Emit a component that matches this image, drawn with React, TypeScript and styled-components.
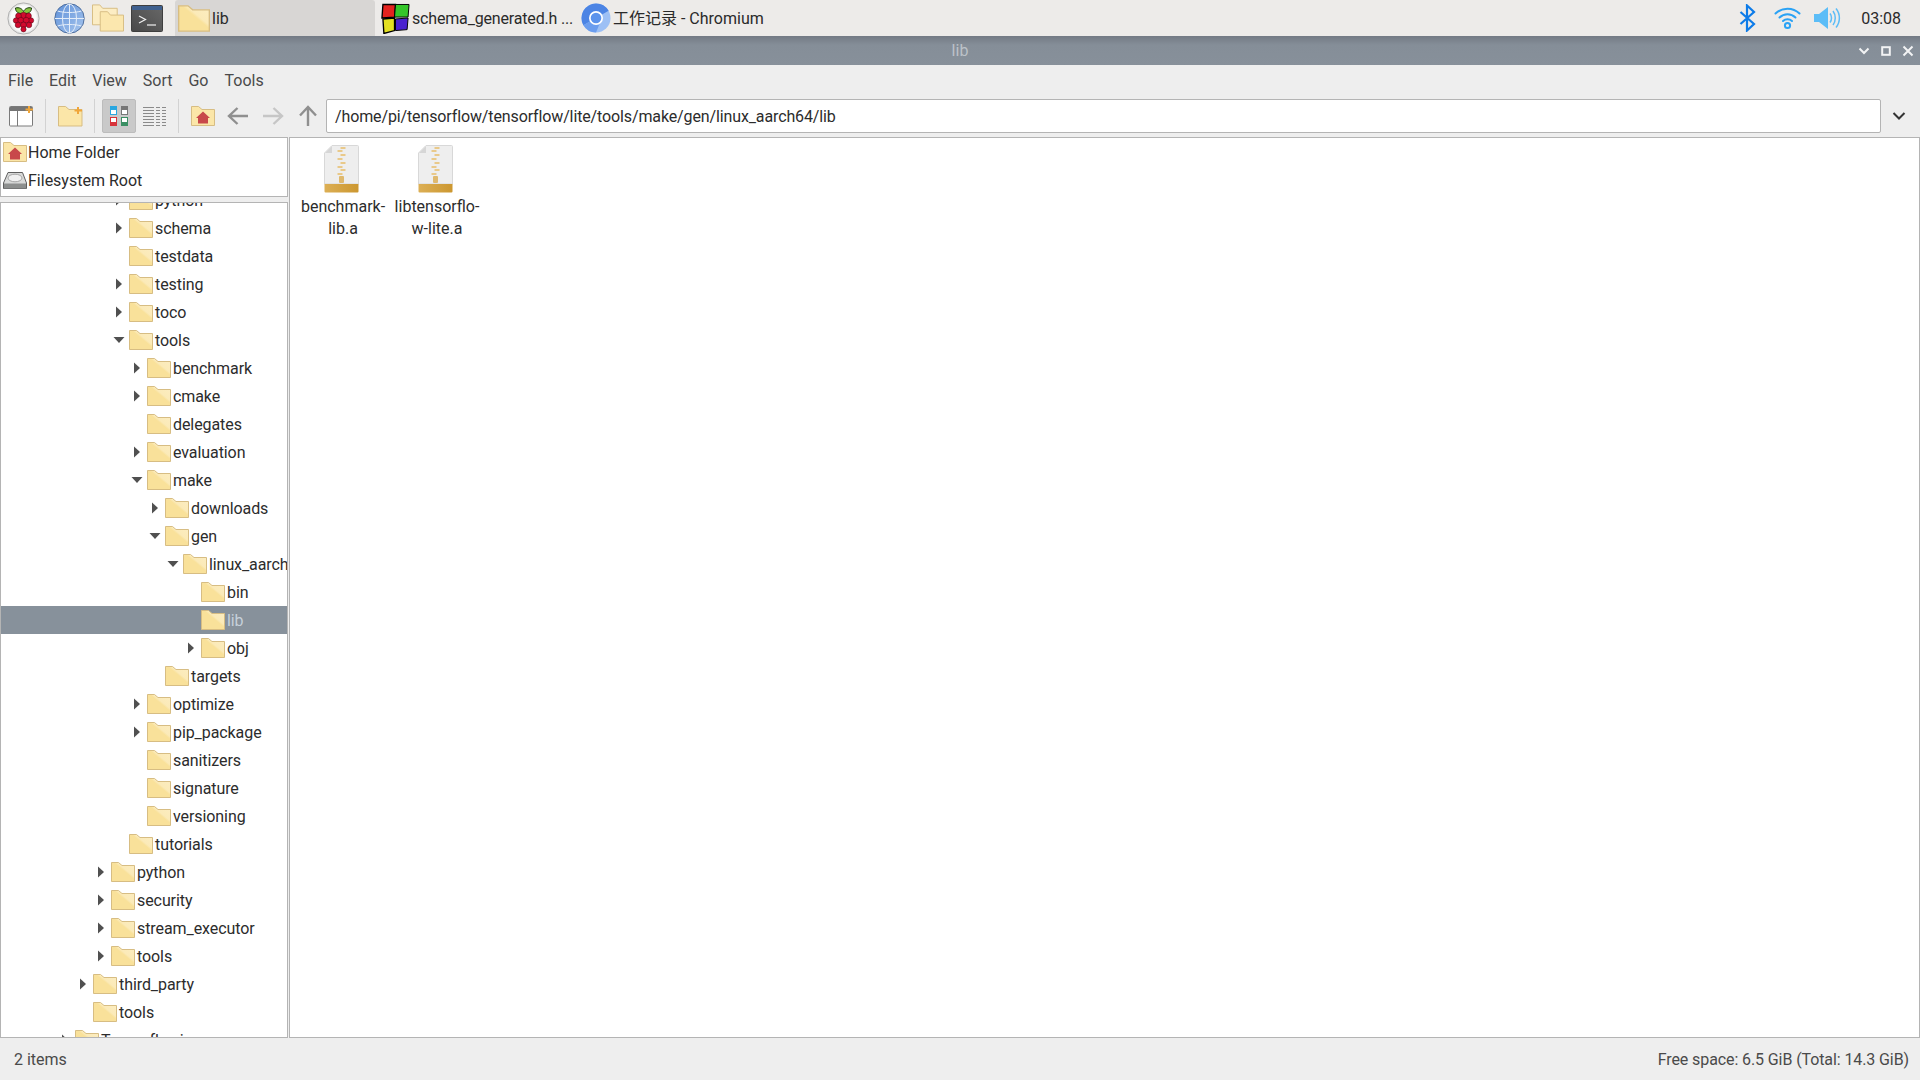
import React from "react";
import styled, { createGlobalStyle } from "styled-components";

const GlobalStyle = createGlobalStyle`
  html, body {
    margin: 0;
    padding: 0;
    height: 100%;
    overflow: hidden;
    background: #eeeeee;
    font-family: "Roboto", "Noto Sans CJK SC", sans-serif;
    font-size: 16px;
  }
`;

const Screen = styled.div`
  width: 1920px;
  height: 1080px;
  display: flex;
  flex-direction: column;
  overflow: hidden;
`;

/* top panel */
const Panel = styled.div`
  height: 36px;
  flex: none;
  display: flex;
  align-items: center;
  background: #edebe9;
  color: #2a2a2a;
`;

const Launcher = styled.div<{ $w: number }>`
  width: ${(p) => p.$w}px;
  height: 36px;
  flex: none;
  display: flex;
  align-items: center;
  justify-content: center;
`;

const TaskList = styled.div`
  margin-left: 5px;
  display: flex;
  gap: 1px;
`;

const TaskButton = styled.div<{ $active?: boolean; $w: number }>`
  width: ${(p) => p.$w}px;
  height: 36px;
  flex: none;
  display: flex;
  align-items: center;
  gap: 2px;
  padding-left: ${(p) => (p.$active ? 3 : 5)}px;
  box-sizing: border-box;
  border-radius: 3px 3px 0 0;
  background: ${(p) => (p.$active ? "#d8d6d4" : "transparent")};
  white-space: nowrap;
  overflow: hidden;
`;

const TaskName = styled.span<{ $tight?: boolean; $cjk?: boolean }>`
  letter-spacing: ${(p) => (p.$tight ? "-0.17px" : "0")};
  margin-bottom: ${(p) => (p.$cjk ? "2px" : "0")};
`;

const Tray = styled.div`
  margin-left: auto;
  display: flex;
  align-items: center;
  padding-right: 19px;
`;

const TrayIcon = styled.div<{ $w: number }>`
  width: ${(p) => p.$w}px;
  height: 36px;
  display: flex;
  align-items: center;
  justify-content: center;
`;

const Clock = styled.span`
  margin-left: 15px;
`;

/* window title */
const TitleBar = styled.div`
  height: 29px;
  flex: none;
  position: relative;
  display: flex;
  align-items: center;
  justify-content: center;
  background: linear-gradient(#737a84 0, #858e98 9px, #87909a 100%);
  color: #bcc2c8;
`;

const WindowButtons = styled.div`
  position: absolute;
  right: 4px;
  top: 0;
  height: 29px;
  display: flex;
  align-items: center;
  gap: 6px;
`;

const MenuBar = styled.div`
  height: 30px;
  flex: none;
  display: flex;
  align-items: center;
  background: #eeeeee;
  color: #4a4a4a;
`;

const MenuItem = styled.span`
  padding: 0 8px;
`;

const ToolBar = styled.div`
  height: 42px;
  flex: none;
  display: flex;
  align-items: flex-start;
  padding: 4px 0 0 2px;
  box-sizing: border-box;
  background: #eeeeee;
`;

const ToolButton = styled.div<{ $w: number; $active?: boolean }>`
  width: ${(p) => p.$w}px;
  height: 34px;
  flex: none;
  display: flex;
  align-items: center;
  justify-content: center;
  box-sizing: border-box;
  border-radius: 2px;
  ${(p) =>
    p.$active
      ? "background: #c9c9c9; border: 1px solid #bcbcbc;"
      : "border: 1px solid transparent;"}
`;

const ToolSep = styled.div<{ $after: number }>`
  width: 1px;
  height: 34px;
  flex: none;
  background: #d2d2d2;
  margin: 0 ${(p) => p.$after}px 0 5px;
`;

const PathEntry = styled.div`
  width: 1555px;
  height: 34px;
  flex: none;
  margin-left: 1px;
  box-sizing: border-box;
  border: 1px solid #b4b4b4;
  border-radius: 2px;
  background: #fff;
  color: #2c2c2c;
  display: flex;
  align-items: center;
  padding-left: 8px;
  letter-spacing: -0.125px;
  white-space: nowrap;
`;

/* body */
const Content = styled.div`
  flex: 1;
  min-height: 0;
  display: flex;
  gap: 1px;
`;

const Side = styled.div`
  width: 288px;
  flex: none;
  display: flex;
  flex-direction: column;
  gap: 5px;
`;

const Places = styled.div`
  height: 60px;
  flex: none;
  box-sizing: border-box;
  border: 1px solid #b4b4b4;
  background: #fff;
`;

const PlaceRow = styled.div`
  height: 28px;
  display: flex;
  align-items: center;
  gap: 1px;
  padding-left: 2px;
  color: #2c2c2c;
`;

const Tree = styled.div`
  flex: 1;
  min-height: 0;
  box-sizing: border-box;
  border: 1px solid #b4b4b4;
  background: #fff;
  overflow: hidden;
`;

const TreeList = styled.div`
  margin-top: -17px;
`;

const TreeRow = styled.div<{ $depth: number; $selected?: boolean }>`
  height: 28px;
  display: flex;
  align-items: center;
  padding-left: ${(p) => 52 + p.$depth * 18}px;
  letter-spacing: -0.08px;
  white-space: nowrap;
  color: ${(p) => (p.$selected ? "#c6d0da" : "#2c2c2c")};
  background: ${(p) => (p.$selected ? "#87919b" : "transparent")};
`;

const Expander = styled.div`
  width: 22px;
  height: 28px;
  flex: none;
  box-sizing: border-box;
  padding-left: 2px;
  display: flex;
  align-items: center;
  justify-content: center;
`;

const RowLabel = styled.span`
  margin-left: 2px;
`;

const Main = styled.div`
  flex: 1;
  box-sizing: border-box;
  border: 1px solid #b4b4b4;
  background: #fff;
  display: flex;
  align-items: flex-start;
  padding: 7px 0 0 6px;
`;

const FileCell = styled.div`
  width: 94px;
  flex: none;
  display: flex;
  flex-direction: column;
  align-items: center;
  color: #2c2c2c;
  line-height: 22px;
  text-align: center;
`;

const FileIcon = styled.div`
  height: 48px;
  margin-right: 4px;
`;

const FileName = styled.div`
  margin-top: 3px;
  white-space: nowrap;
`;

const StatusBar = styled.div`
  height: 42px;
  flex: none;
  display: flex;
  align-items: center;
  justify-content: space-between;
  padding: 0 11px 0 14px;
  background: #eeeeee;
  color: #4a4a4a;
`;

const FreeSpace = styled.span`
  letter-spacing: -0.1px;
`;

/* drawings */
const FolderIcon: React.FC<{ w?: number; h?: number }> = ({ w = 24, h = 20 }) => (
  <svg width={w} height={h} viewBox="0 0 24 20" style={{ flex: "none" }}>
    <defs>
      <linearGradient id="fld" x1="0" y1="1" x2="1" y2="0">
        <stop offset="0" stopColor="#f9e19a" />
        <stop offset="0.55" stopColor="#f9e19a" />
        <stop offset="0.62" stopColor="#fbeab8" />
        <stop offset="1" stopColor="#fcedc2" />
      </linearGradient>
    </defs>
    <path
      d="M0.5 0.5H7.5L11 3.5H23.5V19.5H0.5Z"
      fill="url(#fld)"
      stroke="#d7bd83"
      strokeWidth="1"
    />
  </svg>
);

const ArrowRight = () => (
  <svg width="8" height="12" viewBox="0 0 8 12">
    <path d="M1 0.5L7 6L1 11.5Z" fill="#505050" />
  </svg>
);

const ArrowDown = () => (
  <svg width="12" height="8" viewBox="0 0 12 8">
    <path d="M0.5 1H11.5L6 7Z" fill="#505050" />
  </svg>
);

const Raspberry = () => (
  <svg width="33" height="33" viewBox="0 0 33 33">
    <defs>
      <radialGradient id="rim" cx="0.5" cy="0.5" r="0.5">
        <stop offset="0.8" stopColor="#fbfbfb" />
        <stop offset="1" stopColor="#dcdcdc" />
      </radialGradient>
    </defs>
    <circle cx="16.5" cy="16.5" r="15.6" fill="url(#rim)" stroke="#b0b0b0" strokeWidth="1" />
    <path d="M16 11.5C11 12 8.5 9.5 8.5 6C12 5 15 6.5 16.5 9.5C18 6.5 21 5 24.5 6C24.5 9.5 22 12 17 11.5Z" fill="#86c440" stroke="#1f3d12" strokeWidth="1" />
    <g fill="#d20a2e" stroke="#4a0412" strokeWidth=".5">
      <circle cx="16.5" cy="13.5" r="3.2" />
      <circle cx="11.5" cy="14" r="2.9" />
      <circle cx="21.5" cy="14" r="2.9" />
      <circle cx="9" cy="18.5" r="2.7" />
      <circle cx="24" cy="18.5" r="2.7" />
      <circle cx="13.8" cy="18.3" r="3" />
      <circle cx="19.2" cy="18.3" r="3" />
      <circle cx="11" cy="23" r="2.8" />
      <circle cx="22" cy="23" r="2.8" />
      <circle cx="16.5" cy="23" r="3" />
      <circle cx="16.5" cy="27.3" r="2.6" />
    </g>
  </svg>
);

const Globe = () => (
  <svg width="31" height="31" viewBox="0 0 31 31">
    <defs>
      <linearGradient id="globe" x1="0" y1="0" x2="1" y2="1">
        <stop offset="0" stopColor="#5d8fd8" />
        <stop offset="1" stopColor="#a8c6ee" />
      </linearGradient>
    </defs>
    <circle cx="15.5" cy="15.5" r="14.7" fill="url(#globe)" stroke="#4f6f9e" />
    <ellipse cx="15.5" cy="15.5" rx="7" ry="14.5" fill="none" stroke="#e4edf9" />
    <path d="M15.5 1V30M1 15.5H30M3.5 8C10 10 21 10 27.5 8M3.5 23C10 21 21 21 27.5 23" stroke="#e4edf9" fill="none" />
  </svg>
);

const TwoFolders = () => (
  <svg width="33" height="28" viewBox="0 0 33 28">
    <path d="M.5 .5H8L11 4H26V21H.5Z" fill="#fcedc4" stroke="#d7bd83" />
    <path d="M8.5 7.5H16L19 11H32.5V27.5H8.5Z" fill="#fbe7ae" stroke="#d7bd83" />
  </svg>
);

const TerminalIcon = () => (
  <svg width="32" height="27" viewBox="0 0 32 27">
    <defs>
      <linearGradient id="term" x1="0" y1="1" x2="1" y2="0">
        <stop offset="0" stopColor="#484848" />
        <stop offset="1" stopColor="#686868" />
      </linearGradient>
    </defs>
    <rect x=".5" y=".5" width="31" height="26" rx="1" fill="url(#term)" stroke="#3f3f3f" />
    <rect x="1" y="1" width="30" height="4" fill="#40618f" />
    <path d="M8 11L14.5 14.5L8 18" fill="none" stroke="#f0f0f0" strokeWidth="1.2" />
    <path d="M16 20H25" stroke="#f0f0f0" strokeWidth="1.2" />
  </svg>
);

const SchemaIcon = () => (
  <svg width="29" height="31" viewBox="0 0 30 31">
    <path d="M2 1L15 1L14 14L1 15Z" fill="#e5231f" stroke="#000" strokeWidth="1.4" />
    <path d="M15 1L29 1L28 14L14 14Z" fill="#35c62a" stroke="#000" strokeWidth="1" />
    <path d="M2 16L14 15L14 28L3 31Z" fill="#e3e021" stroke="#000" strokeWidth="1.4" />
    <path d="M15 16L28 15L27 27L15 28Z" fill="#4a22cf" stroke="#000" strokeWidth="1" />
  </svg>
);

const ChromiumIcon = () => (
  <svg width="30" height="30" viewBox="0 0 30 30">
    <circle cx="15" cy="15" r="14.5" fill="#9dc0f5" />
    <path d="M15 .5A14.5 14.5 0 0 0 2.4 22.2L15 15L27.6 7.8A14.5 14.5 0 0 0 15 .5Z" fill="#4c84e4" />
    <path d="M2.4 22.2A14.5 14.5 0 0 0 15 29.5L21 15L15 15Z" fill="#6b9dee" />
    <circle cx="15" cy="15" r="7" fill="#fff" />
    <circle cx="15" cy="15" r="5.3" fill="#5c93ec" />
  </svg>
);

const Bluetooth = () => (
  <svg width="17" height="28" viewBox="0 0 17 28">
    <path d="M1.5 8L15 20L8 26.5V1.5L15 8L1.5 20" fill="none" stroke="#0d7be8" strokeWidth="2.2" />
  </svg>
);

const Wifi = () => (
  <svg width="27" height="24" viewBox="0 0 27 24">
    <g fill="none" stroke="#2aa2f5" strokeWidth="2" strokeLinecap="round">
      <path d="M1.5 7.5C8 1 19 1 25.5 7.5" />
      <path d="M5.5 11.5C10 7 17 7 21.5 11.5" />
      <path d="M9 15C11.5 12.7 15.5 12.7 18 15" />
      <circle cx="13.5" cy="19.5" r="2.6" />
    </g>
  </svg>
);

const Volume = () => (
  <svg width="27" height="24" viewBox="0 0 27 24">
    <path d="M0 8H5L14 1V23L5 16H0Z" fill="#5cbdf7" />
    <g fill="none" stroke="#5cbdf7" strokeWidth="1.5">
      <path d="M16 7.5C18 10 18 14 16 16.5" />
      <path d="M19 5C22 9 22 15 19 19" />
      <path d="M22 2.5C26.5 8 26.5 16 22 21.5" />
    </g>
  </svg>
);

const WinChevron = () => (
  <svg width="16" height="12" viewBox="0 0 16 12">
    <path d="M3.5 3.5L8 8L12.5 3.5" fill="none" stroke="#f2f3f4" strokeWidth="2" />
  </svg>
);

const WinMax = () => (
  <svg width="16" height="12" viewBox="0 0 16 12">
    <rect x="4.2" y="2.2" width="7.6" height="7.6" fill="none" stroke="#f2f3f4" strokeWidth="2" />
  </svg>
);

const WinClose = () => (
  <svg width="16" height="12" viewBox="0 0 16 12">
    <path d="M3.5 1.5L12.5 10.5M12.5 1.5L3.5 10.5" fill="none" stroke="#f2f3f4" strokeWidth="2" />
  </svg>
);

const PanesIcon = () => (
  <svg width="25" height="21" viewBox="0 0 25 21">
    <rect x=".5" y=".5" width="23" height="19.5" rx="1" fill="#fff" stroke="#7a7a7a" />
    <rect x="1" y="1" width="22" height="4" fill="#757575" />
    <path d="M8.5 5V20" stroke="#7a7a7a" />
    <path d="M20 0V7M16.5 3.5H24" stroke="#f0a63a" strokeWidth="2" />
  </svg>
);

const NewFolderIcon = () => (
  <svg width="25" height="21" viewBox="0 0 25 21">
    <path d="M.5 .5H7.5L11 3.5H24V20H.5Z" fill="#fbe6a8" stroke="#d7bd83" />
    <path d="M20 1V8M16.5 4.5H24" stroke="#f0a63a" strokeWidth="2" />
  </svg>
);

const IconViewIcon = () => (
  <svg width="18" height="20" viewBox="0 0 18 20">
    <rect x=".5" y=".5" width="6" height="8" fill="#fff" stroke="#2aa7e0" />
    <rect x="1" y="1" width="5" height="3" fill="#2aa7e0" />
    <rect x="11.5" y=".5" width="6" height="8" fill="#fff" stroke="#777" />
    <rect x="12" y="1" width="5" height="3" fill="#777" />
    <rect x=".5" y="11.5" width="6" height="8" fill="#fff" stroke="#d8333a" />
    <rect x="1" y="16" width="5" height="3" fill="#d8333a" />
    <rect x="11.5" y="11.5" width="6" height="8" fill="#fff" stroke="#3a8f63" />
    <rect x="12" y="16" width="5" height="3" fill="#3a8f63" />
  </svg>
);

const ListViewIcon = () => (
  <svg width="23" height="21" viewBox="0 0 23 21">
    <g stroke="#8a8a8a" strokeWidth="1">
      {[1.5, 4.5, 7.5, 10.5, 13.5, 16.5, 19.5].map((y) => (
        <path key={y} d={`M0 ${y}H11M13 ${y}H17M19 ${y}H23`} />
      ))}
    </g>
  </svg>
);

const HomeFolderIcon: React.FC<{ w?: number }> = ({ w = 24 }) => (
  <svg width={w} height="20" viewBox="0 0 24 20" style={{ flex: "none" }}>
    <path d="M.5 .5H7.5L11 3.5H23.5V19.5H.5Z" fill="#fbe6a8" stroke="#d7bd83" />
    <path d="M12 5.5L19 12H17V17.5H7V12H5Z" fill="#c8484a" />
  </svg>
);

const DriveIcon = () => (
  <svg width="24" height="20" viewBox="0 0 24 20" style={{ flex: "none" }}>
    <path d="M5 2.5H19.5L23.5 13V18.5H.5V13Z" fill="#d9dad9" stroke="#5f5f5f" />
    <path d="M1 13.5H23V18.5H1Z" fill="#8d8f8e" />
    <ellipse cx="12" cy="8" rx="7" ry="3.8" fill="#f0f0f0" stroke="#a5a5a5" />
  </svg>
);

const NavArrow: React.FC<{ d: string; color: string }> = ({ d, color }) => (
  <svg width="22" height="22" viewBox="0 0 22 22">
    <path d={d} fill="none" stroke={color} strokeWidth="2.4" />
  </svg>
);

const ZipIcon = () => (
  <svg width="35" height="48" viewBox="0 0 35 48">
    <defs>
      <linearGradient id="zipBand" x1="0" y1="0" x2="1" y2="0">
        <stop offset="0" stopColor="#dcaf55" />
        <stop offset="1" stopColor="#cc9730" />
      </linearGradient>
    </defs>
    <path d="M8 .5H33.5A1 1 0 0 1 34.5 1.5V39H.5V8Z" fill="#eeeeee" stroke="#d8d8d8" />
    <path d="M1 8L8 1V8Z" fill="#d6d6d6" />
    <path d="M.5 39H34.5V46.5A1 1 0 0 1 33.5 47.5H1.5A1 1 0 0 1 .5 46.5Z" fill="url(#zipBand)" />
    <g fill="#e9c98a">
      {[5, 13, 21, 28].map((y) => (
        <rect key={y} x="13.5" y={y} width="5" height="2" />
      ))}
      {[2, 9, 17, 24].map((y) => (
        <rect key={y} x="16.5" y={y} width="5" height="2" />
      ))}
    </g>
    <rect x="15" y="31" width="5" height="7" rx="1" fill="#dfb96e" />
  </svg>
);

const ChevronDown = () => (
  <svg width="14" height="10" viewBox="0 0 14 10">
    <path d="M1.5 2L7 7.5L12.5 2" fill="none" stroke="#333" strokeWidth="2" />
  </svg>
);

type Node = { name: string; depth: number; open?: "right" | "down"; selected?: boolean };

const treeNodes: Node[] = [
  { name: "python", depth: 3, open: "right" },
  { name: "schema", depth: 3, open: "right" },
  { name: "testdata", depth: 3 },
  { name: "testing", depth: 3, open: "right" },
  { name: "toco", depth: 3, open: "right" },
  { name: "tools", depth: 3, open: "down" },
  { name: "benchmark", depth: 4, open: "right" },
  { name: "cmake", depth: 4, open: "right" },
  { name: "delegates", depth: 4 },
  { name: "evaluation", depth: 4, open: "right" },
  { name: "make", depth: 4, open: "down" },
  { name: "downloads", depth: 5, open: "right" },
  { name: "gen", depth: 5, open: "down" },
  { name: "linux_aarch64", depth: 6, open: "down" },
  { name: "bin", depth: 7 },
  { name: "lib", depth: 7, selected: true },
  { name: "obj", depth: 7, open: "right" },
  { name: "targets", depth: 5 },
  { name: "optimize", depth: 4, open: "right" },
  { name: "pip_package", depth: 4, open: "right" },
  { name: "sanitizers", depth: 4 },
  { name: "signature", depth: 4 },
  { name: "versioning", depth: 4 },
  { name: "tutorials", depth: 3 },
  { name: "python", depth: 2, open: "right" },
  { name: "security", depth: 2, open: "right" },
  { name: "stream_executor", depth: 2, open: "right" },
  { name: "tools", depth: 2, open: "right" },
  { name: "third_party", depth: 1, open: "right" },
  { name: "tools", depth: 1 },
  { name: "Tensorflowi", depth: 0, open: "right" },
];

const menus = ["File", "Edit", "View", "Sort", "Go", "Tools"];

const App: React.FC = () => {
  return (
    <Screen>
      <GlobalStyle />
      <Panel>
        <Launcher $w={46}><Raspberry /></Launcher>
        <Launcher $w={46}><Globe /></Launcher>
        <Launcher $w={32}><TwoFolders /></Launcher>
        <Launcher $w={46}><TerminalIcon /></Launcher>
        <TaskList>
          <TaskButton $active $w={200}>
            <FolderIcon w={32} h={27} />
            <TaskName>lib</TaskName>
          </TaskButton>
          <TaskButton $w={199}>
            <SchemaIcon />
            <TaskName $tight>schema_generated.h ...</TaskName>
          </TaskButton>
          <TaskButton $w={200}>
            <ChromiumIcon />
            <TaskName $cjk>工作记录 - Chromium</TaskName>
          </TaskButton>
        </TaskList>
        <Tray>
          <TrayIcon $w={38}><Bluetooth /></TrayIcon>
          <TrayIcon $w={42}><Wifi /></TrayIcon>
          <TrayIcon $w={38}><Volume /></TrayIcon>
          <Clock>03:08</Clock>
        </Tray>
      </Panel>
      <TitleBar>
        lib
        <WindowButtons>
          <WinChevron />
          <WinMax />
          <WinClose />
        </WindowButtons>
      </TitleBar>
      <MenuBar>
        {menus.map((m) => (
          <MenuItem key={m}>{m}</MenuItem>
        ))}
      </MenuBar>
      <ToolBar>
        <ToolButton $w={38}><PanesIcon /></ToolButton>
        <ToolSep $after={5} />
        <ToolButton $w={38}><NewFolderIcon /></ToolButton>
        <ToolSep $after={7} />
        <ToolButton $w={34} $active><IconViewIcon /></ToolButton>
        <ToolButton $w={37}><ListViewIcon /></ToolButton>
        <ToolSep $after={6} />
        <ToolButton $w={35}><HomeFolderIcon /></ToolButton>
        <ToolButton $w={35}>
          <NavArrow d="M21 11H2M10.5 3L2 11L10.5 19" color="#8f8f8f" />
        </ToolButton>
        <ToolButton $w={35}>
          <NavArrow d="M1 11H20M11.5 3L20 11L11.5 19" color="#c6c6c6" />
        </ToolButton>
        <ToolButton $w={35}>
          <NavArrow d="M11 21V2M3 10.5L11 2L19 10.5" color="#8f8f8f" />
        </ToolButton>
        <PathEntry>/home/pi/tensorflow/tensorflow/lite/tools/make/gen/linux_aarch64/lib</PathEntry>
        <ToolButton $w={36}><ChevronDown /></ToolButton>
      </ToolBar>
      <Content>
        <Side>
          <Places>
            <PlaceRow><HomeFolderIcon />Home Folder</PlaceRow>
            <PlaceRow><DriveIcon />Filesystem Root</PlaceRow>
          </Places>
          <Tree>
            <TreeList>
              {treeNodes.map((n, i) => (
                <TreeRow key={i} $depth={n.depth} $selected={n.selected}>
                  <Expander>
                    {n.open === "right" && <ArrowRight />}
                    {n.open === "down" && <ArrowDown />}
                  </Expander>
                  <FolderIcon />
                  <RowLabel>{n.name}</RowLabel>
                </TreeRow>
              ))}
            </TreeList>
          </Tree>
        </Side>
        <Main>
          <FileCell>
            <FileIcon><ZipIcon /></FileIcon>
            <FileName>benchmark-<br />lib.a</FileName>
          </FileCell>
          <FileCell>
            <FileIcon><ZipIcon /></FileIcon>
            <FileName>libtensorflo-<br />w-lite.a</FileName>
          </FileCell>
        </Main>
      </Content>
      <StatusBar>
        <span>2 items</span>
        <FreeSpace>Free space: 6.5 GiB (Total: 14.3 GiB)</FreeSpace>
      </StatusBar>
    </Screen>
  );
};

export default App;
